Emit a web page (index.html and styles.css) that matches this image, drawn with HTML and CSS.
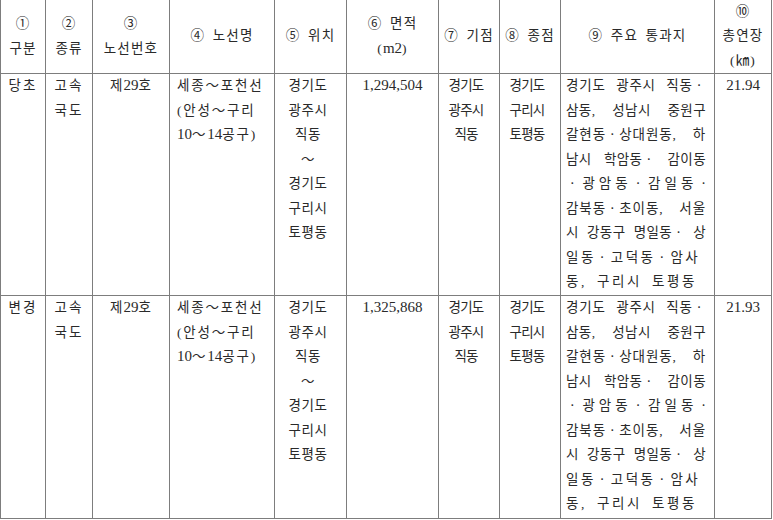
FILE: index.html
```html
<!DOCTYPE html>
<html lang="ko">
<head>
<meta charset="utf-8">
<title>노선 변경 내역</title>
<link rel="stylesheet" href="styles.css">
</head>
<body>
<table class="grid">
  <colgroup>
    <col class="c1"><col class="c2"><col class="c3"><col class="c4"><col class="c5">
    <col class="c6"><col class="c7"><col class="c8"><col class="c9"><col class="c10">
  </colgroup>
  <tr class="head">
    <td>①<br>구분</td>
    <td>②<br>종류</td>
    <td>③<br>노선번호</td>
    <td>④ 노선명</td>
    <td>⑤ 위치</td>
    <td>⑥ 면적<br>(<span class="num">m2</span>)</td>
    <td>⑦ 기점</td>
    <td>⑧ 종점</td>
    <td>⑨ 주요 통과지</td>
    <td>⑩<br>총연장<br>(㎞)</td>
  </tr>
  <tr class="row r1">
    <td class="kind">당초</td>
    <td class="kind">고속<br>국도</td>
    <td>제<span class="num">29</span>호</td>
    <td class="name">세종～포천선<br>(안성～구리<br><span class="num">10</span>～<span class="num">14</span>공구)</td>
    <td class="loc">경기도<br>광주시<br>직동<br>～<br>경기도<br>구리시<br>토평동</td>
    <td><span class="num">1,294,504</span></td>
    <td class="pt">경기도<br>광주시<br>직동</td>
    <td class="pt">경기도<br>구리시<br>토평동</td>
    <td class="via">
      <span class="ln w9">경기도 광주시 직동ㆍ</span>
      <span class="ln">삼동, 성남시 중원구</span>
      <span class="ln w10">갈현동ㆍ상대원동, 하</span>
      <span class="ln">남시 학암동ㆍ 감이동</span>
      <span class="ln sp8">ㆍ광암동ㆍ감일동ㆍ</span>
      <span class="ln w10">감북동ㆍ초이동, 서울</span>
      <span class="ln">시 강동구 명일동ㆍ 상</span>
      <span class="ln sp9">일동ㆍ고덕동ㆍ암사</span>
      <span class="ln end">동, 구리시 토평동</span>
    </td>
    <td><span class="num">21.94</span></td>
  </tr>
  <tr class="row r2">
    <td class="kind">변경</td>
    <td class="kind">고속<br>국도</td>
    <td>제<span class="num">29</span>호</td>
    <td class="name">세종～포천선<br>(안성～구리<br><span class="num">10</span>～<span class="num">14</span>공구)</td>
    <td class="loc">경기도<br>광주시<br>직동<br>～<br>경기도<br>구리시<br>토평동</td>
    <td><span class="num">1,325,868</span></td>
    <td class="pt">경기도<br>광주시<br>직동</td>
    <td class="pt">경기도<br>구리시<br>토평동</td>
    <td class="via">
      <span class="ln w9">경기도 광주시 직동ㆍ</span>
      <span class="ln">삼동, 성남시 중원구</span>
      <span class="ln w10">갈현동ㆍ상대원동, 하</span>
      <span class="ln">남시 학암동ㆍ 감이동</span>
      <span class="ln sp8">ㆍ광암동ㆍ감일동ㆍ</span>
      <span class="ln w10">감북동ㆍ초이동, 서울</span>
      <span class="ln">시 강동구 명일동ㆍ 상</span>
      <span class="ln sp9">일동ㆍ고덕동ㆍ암사</span>
      <span class="ln end">동, 구리시 토평동</span>
    </td>
    <td><span class="num">21.93</span></td>
  </tr>
</table>
</body>
</html>
```

FILE: styles.css
```css
html, body {
  margin: 0;
  padding: 0;
  background: #ffffff;
}

.grid {
  border-collapse: collapse;
  table-layout: fixed;
  width: 772px;
  margin-top: -1px;
  font-family: "Liberation Serif", "Noto Sans CJK KR", serif;
  font-size: 13.5px;
  line-height: 24.5px;
  color: #2a2a2a;
  letter-spacing: 1px;
  word-spacing: 3px;
}

.c1 { width: 45px; }
.c2 { width: 47px; }
.c3 { width: 77px; }
.c4 { width: 105px; }
.c5 { width: 72px; }
.c6 { width: 92px; }
.c7 { width: 61px; }
.c8 { width: 61px; }
.c9 { width: 154px; }
.c10 { width: 57px; }

.grid td {
  border: 1px solid #7d7d7d;
  padding: 0 4px;
  text-align: center;
  vertical-align: top;
  white-space: nowrap;
  overflow: hidden;
}

.head { height: 74px; }
.head td {
  vertical-align: middle;
  line-height: 24.2px;
  letter-spacing: 1.2px;
}

.r1 { height: 222px; }
.r2 { height: 223px; }

.num {
  font-size: 15px;
  line-height: 1;
  letter-spacing: 0;
}

.grid td.kind { letter-spacing: 2px; }

.grid td.name {
  text-align: left;
  padding-left: 7px;
  letter-spacing: 1.8px;
}

.grid td.loc {
  padding: 0 7px 0 2px;
  letter-spacing: 0.6px;
}

.grid td.pt {
  padding: 0 8px 0 2px;
  letter-spacing: -0.8px;
}

.grid td.via {
  padding: 0 8px 0 5px;
  text-align: left;
  letter-spacing: 0.4px;
  word-spacing: 1px;
}

.ln {
  display: block;
  text-align: justify;
  text-align-last: justify;
}

.ln.w9 { letter-spacing: 0.8px; }
.ln.w10 { letter-spacing: 0.9px; }
.ln.sp8 { letter-spacing: 4px; }
.ln.sp9 { letter-spacing: 2.5px; }

.ln.end {
  text-align-last: left;
  letter-spacing: 2.6px;
  word-spacing: 4px;
}
```
